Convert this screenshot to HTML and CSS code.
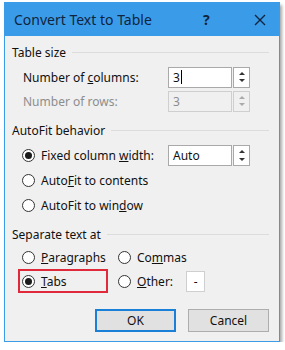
FILE: index.html
```html
<!DOCTYPE html>
<html>
<head>
  <title>Convert Text to Table</title>
  <link rel="stylesheet" href="styles.css">
</head>
<body>
  <div class="dialog">
    <div class="titlebar">
      <span class="title">Convert Text to Table</span>
      <span class="help">?</span>
      <svg class="close" width="12" height="12" viewBox="0 0 12 12">
        <path d="M1 1 L11 11 M11 1 L1 11" stroke="#10243d" stroke-width="1.4" fill="none"/>
      </svg>
    </div>

    <div class="content">
      <div class="group">Table size</div>
      <div class="row">
        <span class="label"><span>Number of <u>c</u>olumns:</span></span>
        <div class="spin">
          <div class="box">3<span class="caret"></span></div>
          <div class="arrows"><i class="up"></i><i class="down"></i></div>
        </div>
      </div>
      <div class="row disabled">
        <span class="label"><span>Number of rows:</span></span>
        <div class="spin">
          <div class="box">3</div>
          <div class="arrows"><i class="up"></i><i class="down"></i></div>
        </div>
      </div>

      <div class="group g2">AutoFit behavior</div>
      <div class="row opt first">
        <span class="label"><span class="radio on"></span><span>Fixed column <u>w</u>idth:</span></span>
        <div class="spin">
          <div class="box active">Auto</div>
          <div class="arrows"><i class="up"></i><i class="down"></i></div>
        </div>
      </div>
      <div class="row opt"><span class="radio"></span><span>Auto<u>F</u>it to contents</span></div>
      <div class="row opt"><span class="radio"></span><span>AutoFit to win<u>d</u>ow</span></div>

      <div class="group g3">Separate text at</div>
      <div class="sep">
        <div class="cell"><span class="radio"></span><span><u>P</u>aragraphs</span></div>
        <div class="cell"><span class="radio"></span><span>Co<u>m</u>mas</span></div>
        <div class="cell marked"><span class="radio on"></span><span><u>T</u>abs</span></div>
        <div class="cell"><span class="radio"></span><span><u>O</u>ther:</span><span class="small">-</span></div>
      </div>

      <div class="buttons">
        <button class="btn default">OK</button>
        <button class="btn">Cancel</button>
      </div>
    </div>
  </div>
</body>
</html>
```

FILE: styles.css
```css
body {
  margin: 0;
  background: #fff;
  font-family: "Noto Sans", "Open Sans", sans-serif;
  font-size: 12px;
  color: #111;
}

.dialog {
  margin: 2px 0 0 4px;
  width: 274px;
  height: 338px;
  border: 1px solid #3d9ce8;
  background: #f0f0f0;
  box-shadow: 2px 3px 3px rgba(0, 0, 0, 0.35);
}

.titlebar {
  height: 33px;
  background: #3a9ce9;
  display: flex;
  align-items: center;
  padding-left: 9px;
  color: #10243d;
}

.title {
  font-size: 14px;
  width: 189px;
}

.help {
  font-size: 14px;
  font-weight: bold;
  width: 51px;
}

.close {
  margin-top: 1px;
}

.content {
  padding: 0 10px 0 7px;
}

.group {
  display: flex;
  align-items: center;
  height: 20px;
  margin-top: 6px;
  gap: 6px;
}

.group::after {
  content: "";
  flex: 1;
  height: 1px;
  background: #dcdcdc;
}

.g2 {
  margin-top: 7px;
}

.g3 {
  margin-top: 6px;
}

.row {
  display: flex;
  align-items: center;
  height: 24px;
  margin-left: 11px;
}

.group + .row {
  margin-top: 3px;
}

.row.opt {
  height: 25px;
  margin-left: 10px;
}

.label {
  display: flex;
  align-items: center;
  width: 145px;
}

.opt .label {
  width: 146px;
}

.disabled {
  color: #8d8d8d;
}

.spin {
  display: flex;
  height: 21px;
}

.box {
  width: 58px;
  height: 19px;
  border: 1px solid #a9a9a9;
  background: #fff;
  padding-left: 4px;
  line-height: 19px;
  display: flex;
  align-items: center;
}

.disabled .box {
  background: #f0f0f0;
  border-color: #cfcfcf;
}

.caret {
  width: 1px;
  height: 14px;
  background: #000;
  margin-left: 1px;
}

.arrows {
  width: 15px;
  height: 19px;
  margin-left: 1px;
  border: 1px solid #a9a9a9;
  background: #fff;
  display: flex;
  flex-direction: column;
  align-items: center;
  justify-content: space-evenly;
}

.disabled .arrows {
  background: #f0f0f0;
  border-color: #cfcfcf;
}

.arrows i {
  width: 0;
  height: 0;
  border-left: 3px solid transparent;
  border-right: 3px solid transparent;
}

.arrows .up {
  border-bottom: 3px solid #333;
}

.arrows .down {
  border-top: 3px solid #333;
}

.disabled .arrows .up {
  border-bottom-color: #aaa;
}

.disabled .arrows .down {
  border-top-color: #aaa;
}

.radio {
  display: inline-flex;
  align-items: center;
  justify-content: center;
  width: 11px;
  height: 11px;
  border: 1px solid #333;
  border-radius: 50%;
  background: #fff;
  margin-right: 6px;
  flex: none;
}

.radio.on::after {
  content: "";
  width: 7px;
  height: 7px;
  border-radius: 50%;
  background: #1b1b1b;
}

.sep {
  display: grid;
  grid-template-columns: 96px 1fr;
  grid-auto-rows: 24px;
  margin-left: 10px;
  margin-top: 1px;
}

.cell {
  display: flex;
  align-items: center;
}

.cell.marked {
  margin-left: -4px;
  padding-left: 2px;
  width: 90px;
  border: 2px solid #e02a3c;
  box-sizing: border-box;
}

.small {
  display: inline-block;
  width: 17px;
  height: 19px;
  line-height: 19px;
  border: 1px solid #cfcfcf;
  background: #fff;
  margin-left: 13px;
  text-align: center;
}

.buttons {
  display: flex;
  justify-content: flex-end;
  gap: 12px;
  margin-top: 16px;
}

.btn {
  width: 81px;
  height: 23px;
  font-family: "Noto Sans", "Open Sans", sans-serif;
  font-size: 12px;
  color: #111;
  background: #e1e1e1;
  border: 1px solid #adadad;
  padding: 0;
}

.btn.default {
  border: 2px solid #1a7fd6;
}
```
